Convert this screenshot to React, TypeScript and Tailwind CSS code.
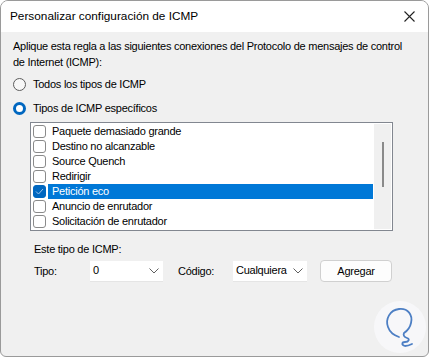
import React from 'react';

const items = [
  'Paquete demasiado grande',
  'Destino no alcanzable',
  'Source Quench',
  'Redirigir',
  'Petición eco',
  'Anuncio de enrutador',
  'Solicitación de enrutador',
];

const Chevron = () => (
  <svg width="10" height="6" viewBox="0 0 10 6" className="text-[#606060]">
    <path d="M0.5 0.5 L5 5 L9.5 0.5" fill="none" stroke="currentColor" strokeWidth="1" />
  </svg>
);

const Select: React.FC<{ value: string; className: string }> = ({ value, className }) => (
  <div className={`h-[21px] bg-white border-b border-[#e5e5e5] flex items-center justify-between pl-[3px] pr-[4px] ${className}`}>
    <span>{value}</span>
    <Chevron />
  </div>
);

export default function App() {
  return (
    <div className="w-[430px] h-[357px] bg-white relative text-[11px] tracking-[-0.25px] text-black" style={{ fontFamily: '"Segoe UI", "Liberation Sans", Arial, sans-serif' }}>
      <div className="w-[429px] h-[357px] border border-[#9a9a9a] rounded-t-[8px] rounded-b-[6px] overflow-hidden flex flex-col bg-[#f0f0f0]">
        {/* title bar */}
        <div className="h-[31px] bg-white flex items-center justify-between pl-[9px] pr-[13px] shrink-0">
          <span className="text-[11.8px] tracking-normal pt-[1px]">Personalizar configuración de ICMP</span>
          <svg width="11" height="11" viewBox="0 0 11 11">
            <path d="M0.5 0.5 L10.5 10.5 M10.5 0.5 L0.5 10.5" stroke="#222" strokeWidth="1.1" />
          </svg>
        </div>

        <div className="flex flex-col pl-[12px] pr-[10px] pt-[6px] relative flex-1">
          <p className="leading-[16px] w-[396px]">
            Aplique esta regla a las siguientes conexiones del Protocolo de mensajes de control de Internet (ICMP):
          </p>

          <div className="flex items-center gap-[7px] mt-[6px] h-[16px]">
            <span className="w-[13px] h-[13px] rounded-full border border-[#5c5c5c] bg-[#f7f7f7]" />
            <span>Todos los tipos de ICMP</span>
          </div>
          <div className="flex items-center gap-[7px] mt-[8px] h-[16px]">
            <span className="w-[13px] h-[13px] rounded-full border-[3.5px] border-[#0067c0] bg-white" />
            <span>Tipos de ICMP específicos</span>
          </div>

          {/* list box */}
          <div className="ml-[17px] mt-[6px] w-[363px] h-[109px] border border-[#828790] bg-white flex">
            <div className="flex-1 flex flex-col pt-[1px] pl-[2px]">
              {items.map((t, i) => {
                const sel = i === 4;
                return (
                  <div key={t} className="h-[15px] flex items-center">
                    <span
                      className={`w-[13px] h-[13px] rounded-[3px] border shrink-0 flex items-center justify-center ${
                        sel ? 'bg-[#0067c0] border-[#0067c0]' : 'bg-white border-[#8a8a8a]'
                      }`}
                    >
                      {sel && (
                        <svg width="9" height="7" viewBox="0 0 9 7">
                          <path d="M1 3.5 L3.5 6 L8 1" fill="none" stroke="#9cc3ea" strokeWidth="1" />
                        </svg>
                      )}
                    </span>
                    <span
                      className={`ml-[2px] h-[15px] flex-1 pl-[4px] flex items-center ${
                        sel ? 'bg-[#0078d7] text-white' : ''
                      }`}
                    >
                      {t}
                    </span>
                  </div>
                );
              })}
            </div>
            <div className="w-[17px] bg-[#f0f0f0] my-[1px] mr-[1px] ml-[1px] flex justify-center pt-[18px]">
              <div className="w-[2px] h-[45px] bg-[#8a8a8a]" />
            </div>
          </div>

          <div className="ml-[21px] mt-[10px] leading-[16px]">Este tipo de ICMP:</div>
          <div className="ml-[21px] mt-[3px] flex items-center">
            <span className="w-[56px]">Tipo:</span>
            <Select value="0" className="w-[73px]" />
            <span className="ml-[15px] w-[55px]">Código:</span>
            <Select value="Cualquiera" className="w-[74px]" />
            <button className="ml-[13px] w-[72px] h-[22px] border border-[#d0d0d0] rounded-[4px] bg-[#fdfdfd]">
              Agregar
            </button>
          </div>

          {/* watermark */}
          <div className="absolute right-[2px] bottom-[3px] w-[52px] h-[52px] rounded-full bg-[#f7f7f9] flex items-center justify-center">
            <svg width="40" height="44" viewBox="0 0 40 44">
              <path
                d="M19 32 C14 30 10 28 8 22 C5 14 10 5 19 4 C28 3 33 10 31 18 C30 23 27 26 24 28 C23 30 24 32 27 33 C30 34 29 37 25 37 C22 37 21 40 25 41 C28 41 30 40 32 39"
                fill="none"
                stroke="#4d7fc4"
                strokeWidth="1.8"
                strokeLinecap="round"
              />
            </svg>
          </div>
        </div>
      </div>
    </div>
  );
}
